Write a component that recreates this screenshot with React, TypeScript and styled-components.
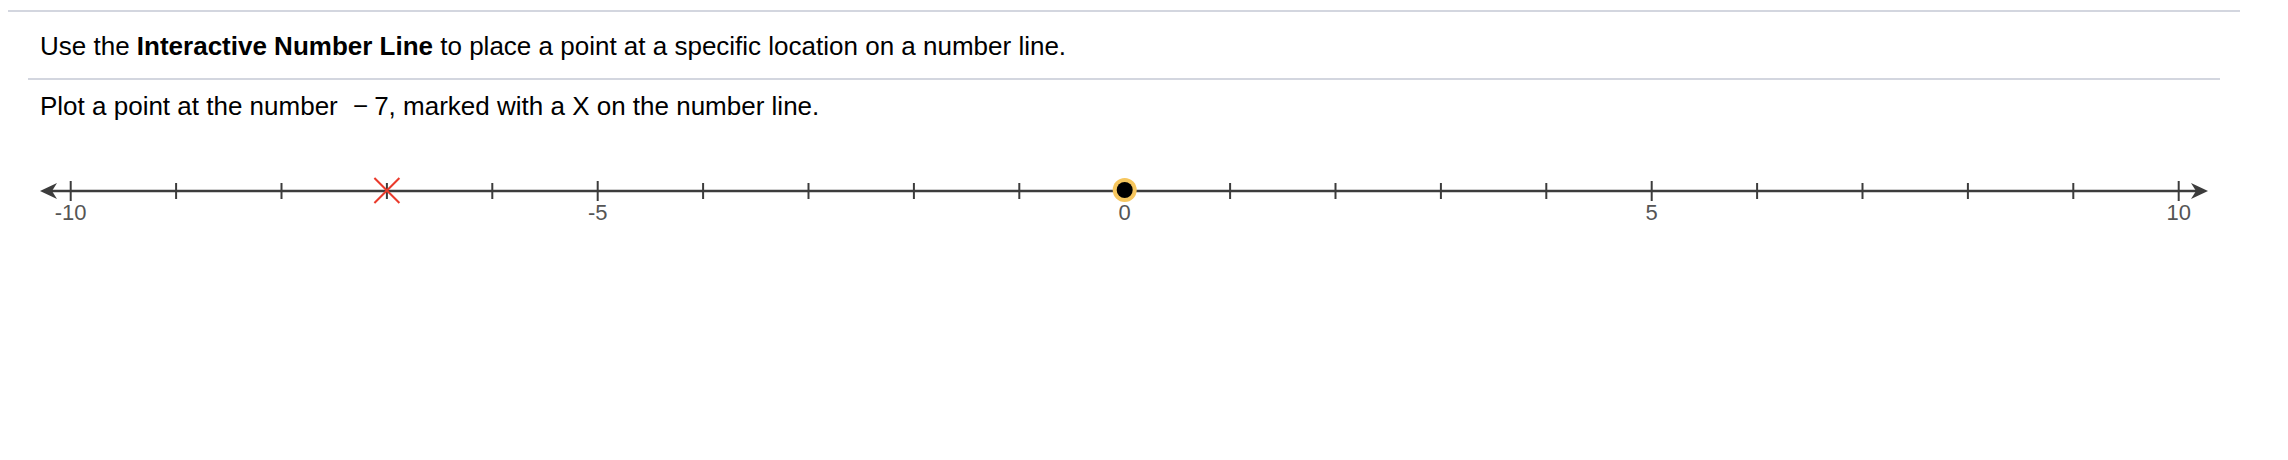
import React from "react";
import styled, { createGlobalStyle } from "styled-components";

const GlobalStyle = createGlobalStyle`
  body {
    margin: 0;
    background: #ffffff;
    font-family: "Liberation Sans", Arial, sans-serif;
  }
`;

const Page = styled.div`
  width: 2232px;
  padding-left: 8px;
  padding-top: 10px;
`;

const Rule = styled.div`
  height: 2px;
  background: #d3d6df;
`;

const Section = styled.div`
  padding: 0 20px;
`;

const Instruction = styled.div`
  font-size: 26px;
  line-height: 33px;
  color: #000;
  padding: 18px 12px 15px;
`;

const Prompt = styled.div`
  font-size: 26px;
  line-height: 33px;
  color: #000;
  padding: 10px 12px 0;
`;

const MathMinus = styled.span`
  margin-left: 8px;
  margin-right: 6px;
`;

const LineCanvas = styled.svg`
  display: block;
  margin-top: 1px;
`;

const LINE_Y = 67;
const ORIGIN = 62.7;
const UNIT = 105.4;
const ink = "#3c3c3c";

const xOf = (v: number) => ORIGIN + (v + 10) * UNIT;

const NumberLine = () => {
  const values = Array.from({ length: 21 }, (_, i) => i - 10);
  const left = 32;
  const right = 2200;
  return (
    <LineCanvas width={2232} height={110}>
      <line x1={left + 4} y1={LINE_Y} x2={right - 4} y2={LINE_Y} stroke={ink} strokeWidth={2.5} />
      <path
        d={`M${left} ${LINE_Y} L${left + 17} ${LINE_Y - 8} L${left + 12} ${LINE_Y} L${left + 17} ${LINE_Y + 8} Z`}
        fill={ink}
      />
      <path
        d={`M${right} ${LINE_Y} L${right - 17} ${LINE_Y - 8} L${right - 12} ${LINE_Y} L${right - 17} ${LINE_Y + 8} Z`}
        fill={ink}
      />
      {values.map((v) => {
        const major = v % 5 === 0;
        const h = major ? 10 : 8;
        return (
          <g key={v}>
            <line x1={xOf(v)} y1={LINE_Y - h} x2={xOf(v)} y2={LINE_Y + h} stroke={ink} strokeWidth={2} />
            {major && (
              <text
                x={xOf(v)}
                y={96}
                textAnchor="middle"
                fill="#555555"
                fontSize={22}
                fontFamily='"Liberation Sans", Arial, sans-serif'
              >
                {v}
              </text>
            )}
          </g>
        );
      })}
      <g stroke="#ea3a2b" strokeWidth={2}>
        <line x1={xOf(-7) - 12.5} y1={LINE_Y - 13} x2={xOf(-7) + 12.5} y2={LINE_Y + 12} />
        <line x1={xOf(-7) + 12.5} y1={LINE_Y - 13} x2={xOf(-7) - 12.5} y2={LINE_Y + 12} />
      </g>
      <circle cx={xOf(0)} cy={LINE_Y - 1} r={12} fill="#f6c65e" />
      <circle cx={xOf(0)} cy={LINE_Y - 1} r={8} fill="#000000" />
    </LineCanvas>
  );
};

export default function App() {
  return (
    <>
      <GlobalStyle />
      <Page>
        <Rule />
        <Section>
          <Instruction>
            Use the <b>Interactive Number Line</b> to place a point at a specific location on a number line.
          </Instruction>
          <Rule />
          <Prompt>
            Plot a point at the number <MathMinus>−</MathMinus>7, marked with a X on the number line.
          </Prompt>
        </Section>
        <NumberLine />
      </Page>
    </>
  );
}
